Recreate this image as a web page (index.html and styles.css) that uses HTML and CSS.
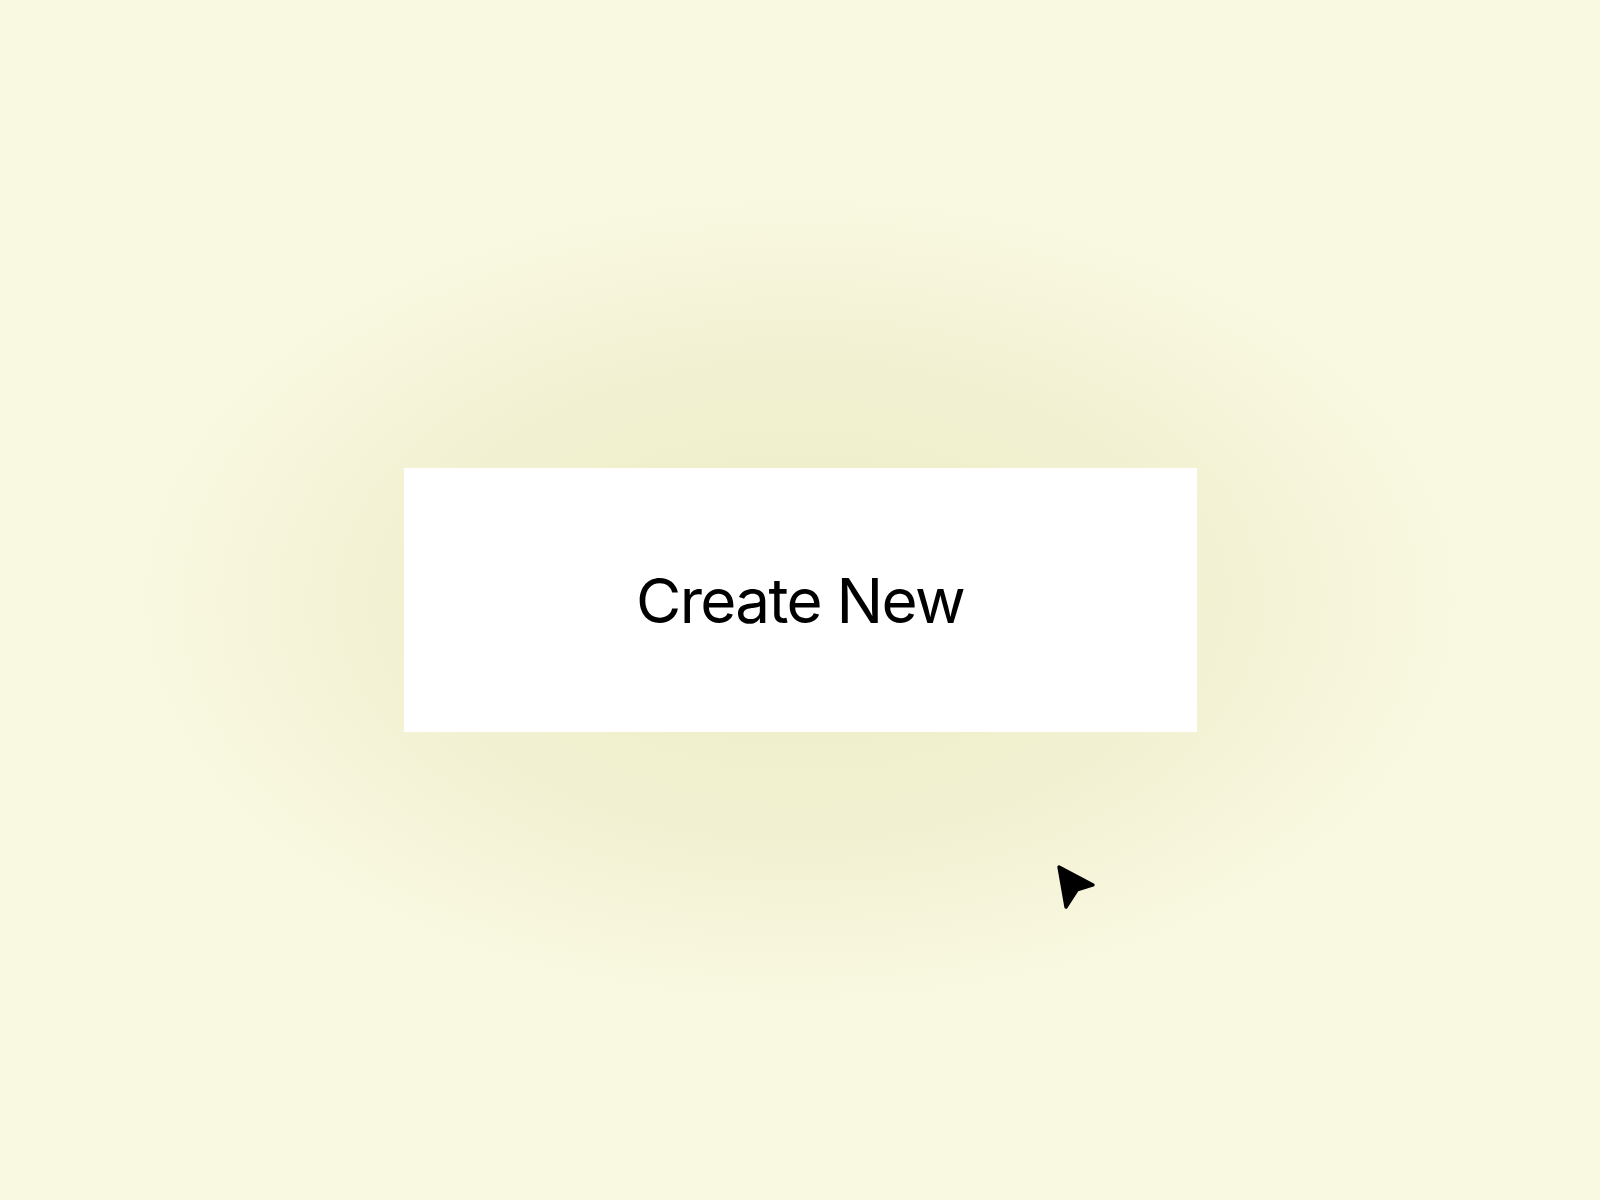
FILE: index.html
```html
<!DOCTYPE html>
<html lang="en">
<head>
<meta charset="utf-8">
<title>Create New</title>
<link rel="stylesheet" href="styles.css">
</head>
<body>
<main class="stage">
  <button class="card" type="button">Create New</button>
  <svg class="cursor" width="44" height="48" viewBox="0 0 44 48" aria-hidden="true">
    <path d="M4 3 L38 21 L22 26 L11 43 Z" fill="#000" stroke="#000" stroke-width="3.4" stroke-linejoin="round"/>
  </svg>
</main>
</body>
</html>
```
FILE: styles.css
```css
html, body {
  margin: 0;
  padding: 0;
  width: 100%;
  height: 100%;
  background: #f9f9e1;
  overflow: hidden;
}
.stage {
  position: relative;
  width: 1600px;
  height: 1200px;
  display: flex;
  align-items: center;
  justify-content: center;
  background: radial-gradient(ellipse 665px 405px at 800px 600px,
    #efeecb 0%,
    #f0efcd 35%,
    #f1f0d0 55%,
    #f4f3d7 72%,
    #f7f6dd 87%,
    #f9f9e1 100%);
}
.card {
  width: 793px;
  height: 264px;
  background: #ffffff;
  border: none;
  padding: 0;
  margin: 0;
  font-family: Inter, "Liberation Sans", sans-serif;
  font-size: 62px;
  font-weight: 400;
  letter-spacing: -1.7px;
  color: #000;
}
.cursor {
  position: absolute;
  left: 1055px;
  top: 864px;
}
```
